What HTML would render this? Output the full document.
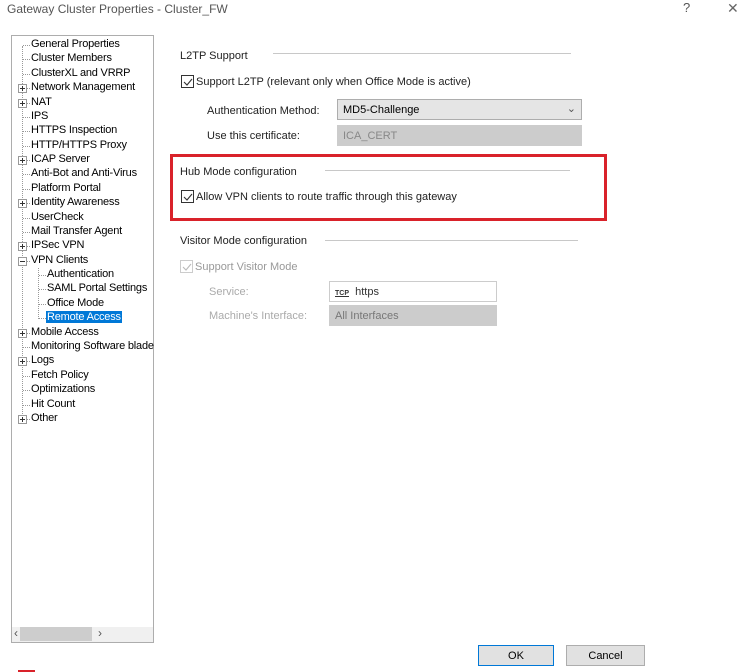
<!DOCTYPE html>
<html><head><style>
body{margin:0;width:756px;height:672px;background:#fff;font-family:"Liberation Sans",Arial,sans-serif;position:relative;overflow:hidden;color:#000}
.a{position:absolute;white-space:nowrap}
.t{font-size:11px;letter-spacing:-0.2px}
.r{font-size:11px;color:#222}
.line{position:absolute;height:1px;background:#c8c8c8}
.cb{position:absolute;width:11px;height:11px;border:1px solid #333;background:#fff}
.cb svg{position:absolute;left:1px;top:1px}
.dd{position:absolute;border:1px solid #adadad;background:#e5e5e5;box-sizing:border-box;font-size:11px;padding:4px 0 0 5px}
.pm{position:absolute;width:7px;height:7px;border:1px solid #999;background:#fff}
.pm:before{content:"";position:absolute;left:1px;top:3px;width:5px;height:1px;background:#333}
.pm.p:after{content:"";position:absolute;left:3px;top:1px;width:1px;height:5px;background:#333}
</style></head><body>
<div class="a" style="left:7px;top:2px;font-size:12px;color:#555">Gateway Cluster Properties - Cluster_FW</div>
<div class="a" style="left:683px;top:0px;font-size:13px;color:#555">?</div>
<div class="a" style="left:727px;top:0px;font-size:14px;color:#666">✕</div>

<div style="position:absolute;left:11px;top:35px;width:143px;height:608px;border:1px solid #adadad;box-sizing:border-box"></div>
<div style="position:absolute;left:22px;top:46px;width:0;height:374px;border-left:1px dotted #999"></div>
<div style="position:absolute;left:38px;top:268px;width:0;height:51px;border-left:1px dotted #999"></div>
<div id="tree"></div>
<div style="position:absolute;left:12px;top:627px;width:141px;height:15px;background:#f0f0f0"></div>
<div style="position:absolute;left:20px;top:627px;width:72px;height:14px;background:#cdcdcd"></div>
<div class="a" style="left:14px;top:626px;font-size:12px;color:#555">‹</div>
<div class="a" style="left:98px;top:626px;font-size:12px;color:#555">›</div>

<div class="a r" style="left:180px;top:50px">L2TP Support</div>
<div class="line" style="left:273px;top:53px;width:298px"></div>
<div class="cb" style="left:181px;top:75px"><svg width="10" height="10"><path d="M1 5 L4 8 L9 2" fill="none" stroke="#333" stroke-width="1.1"/></svg></div>
<div class="a r" style="left:196px;top:76px">Support L2TP (relevant only when Office Mode is active)</div>
<div class="a r" style="left:207px;top:105px">Authentication Method:</div>
<div class="dd" style="left:337px;top:99px;width:245px;height:21px">MD5-Challenge<span style="position:absolute;right:5px;top:2px;color:#555">⌄</span></div>
<div class="a r" style="left:207px;top:130px">Use this certificate:</div>
<div class="dd" style="left:337px;top:125px;width:245px;height:21px;background:#ccc;border-color:#ccc;color:#888">ICA_CERT</div>

<div style="position:absolute;left:170px;top:154px;width:437px;height:67px;border:3px solid #d9222a;box-sizing:border-box"></div>
<div class="a r" style="left:180px;top:166px">Hub Mode configuration</div>
<div class="line" style="left:325px;top:170px;width:245px"></div>
<div class="cb" style="left:181px;top:190px"><svg width="10" height="10"><path d="M1 5 L4 8 L9 2" fill="none" stroke="#333" stroke-width="1.1"/></svg></div>
<div class="a r" style="left:196px;top:191px">Allow VPN clients to route traffic through this gateway</div>

<div class="a r" style="left:180px;top:235px">Visitor Mode configuration</div>
<div class="line" style="left:325px;top:240px;width:253px"></div>
<div class="cb" style="left:180px;top:260px;border-color:#ccc"><svg width="10" height="10"><path d="M1 5 L4 8 L9 2" fill="none" stroke="#bbb" stroke-width="1.1"/></svg></div>
<div class="a r" style="left:195px;top:261px;color:#999">Support Visitor Mode</div>
<div class="a r" style="left:209px;top:286px;color:#aaa">Service:</div>
<div class="dd" style="left:329px;top:281px;width:168px;height:21px;background:#fff;border-color:#ccc;color:#333"><span style="font-size:7px;text-decoration:underline;font-weight:bold">TCP</span>&nbsp; https</div>
<div class="a r" style="left:209px;top:310px;color:#aaa">Machine's Interface:</div>
<div class="dd" style="left:329px;top:305px;width:168px;height:21px;background:#ccc;border-color:#ccc;color:#777">All Interfaces</div>

<div style="position:absolute;left:478px;top:645px;width:76px;height:21px;border:1px solid #0078d7;background:#e1e1e1;box-sizing:border-box;font-size:11px;text-align:center;line-height:20px">OK</div>
<div style="position:absolute;left:566px;top:645px;width:79px;height:21px;border:1px solid #adadad;background:#e1e1e1;box-sizing:border-box;font-size:11px;text-align:center;line-height:20px">Cancel</div>
<div style="position:absolute;left:18px;top:670px;width:17px;height:2px;background:#d9222a"></div>
<script>
var items=[["General Properties",0,0],["Cluster Members",0,0],["ClusterXL and VRRP",0,0],["Network Management",0,1],["NAT",0,1],["IPS",0,0],["HTTPS Inspection",0,0],["HTTP/HTTPS Proxy",0,0],["ICAP Server",0,1],["Anti-Bot and Anti-Virus",0,0],["Platform Portal",0,0],["Identity Awareness",0,1],["UserCheck",0,0],["Mail Transfer Agent",0,0],["IPSec VPN",0,1],["VPN Clients",0,2],["Authentication",1,0],["SAML Portal Settings",1,0],["Office Mode",1,0],["Remote Access",1,3],["Mobile Access",0,1],["Monitoring Software blade",0,0],["Logs",0,1],["Fetch Policy",0,0],["Optimizations",0,0],["Hit Count",0,0],["Other",0,1]];
var h="";items.forEach(function(it,i){var y=39+i*14.38;var x=it[1]?47:31;
h+='<div style="position:absolute;left:'+(it[1]?39:23)+'px;top:'+(y+6)+'px;width:'+(x-(it[1]?39:23)-1)+'px;border-top:1px dotted #999"></div>';
if(it[2]==1||it[2]==2)h+='<div class="pm'+(it[2]==1?' p':'')+'" style="left:18px;top:'+(y+2)+'px"></div>';
h+='<div class="a t" style="left:'+(x-(it[2]==3?1:0))+'px;top:'+(y-1)+'px;'+(it[2]==3?'background:#0078d7;color:#fff;padding:0 1px;':'')+'">'+it[0]+'</div>';});
document.getElementById("tree").innerHTML=h;
</script>
</body></html>
